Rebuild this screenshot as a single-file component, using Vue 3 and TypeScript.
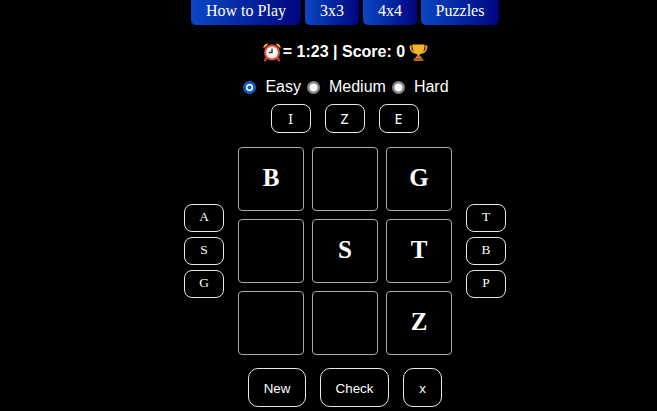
<script setup lang="ts">
const nav = ['How to Play', '3x3', '4x4', 'Puzzles']
const levels = ['Easy', 'Medium', 'Hard']
const top = ['I', 'Z', 'E']
const left = ['A', 'S', 'G']
const right = ['T', 'B', 'P']
const cells = ['B', '', 'G', '', 'S', 'T', '', '', 'Z']
const actions = ['New', 'Check', 'x']
</script>

<template>
  <main class="page">
    <nav class="nav">
      <button v-for="n in nav" :key="n" class="nav-btn" type="button">{{ n }}</button>
    </nav>
    <div class="score">
      <svg class="ico" viewBox="0 0 20 20" width="20" height="20" aria-hidden="true">
        <path d="M1.5 6.5 C1 3 4 1 6.5 2 Z" fill="#f5b52e" />
        <path d="M18.5 6.5 C19 3 16 1 13.5 2 Z" fill="#f5b52e" />
        <path d="M4.5 16 L3 18.5 M15.5 16 L17 18.5" stroke="#d8503f" stroke-width="2" stroke-linecap="round" />
        <circle cx="10" cy="10.5" r="8" fill="#e04a40" />
        <circle cx="10" cy="10.5" r="6" fill="#f7f4ef" />
        <path d="M10 6.5 V10.5 H6.8" fill="none" stroke="#333" stroke-width="1.4" />
      </svg>
      <span>= 1:23 | Score: 0</span>
      <svg class="ico trophy" viewBox="0 0 20 20" width="19" height="19" aria-hidden="true">
        <path d="M3 3.5 H1.5 C1.5 7.5 3.5 10 7 10.5 M17 3.5 H18.5 C18.5 7.5 16.5 10 13 10.5" fill="none" stroke="#f2ac26" stroke-width="1.8" />
        <path d="M3.5 1.5 H16.5 C16.5 7 15 11 11 12 V14 H9 V12 C5 11 3.5 7 3.5 1.5 Z" fill="#f7b228" />
        <path d="M7.5 14 H12.5 L13.5 16 H6.5 Z" fill="#d98a2c" />
        <rect x="5" y="16" width="10" height="3" fill="#b5602f" />
      </svg>
    </div>
    <form class="levels">
      <label v-for="(l, i) in levels" :key="l" class="level">
        <input type="radio" name="level" :value="l" :checked="i === 0" />
        <span>{{ l }}</span>
      </label>
    </form>
    <div class="letters top">
      <button v-for="t in top" :key="t" class="letter top-letter" type="button">{{ t }}</button>
    </div>
    <section class="play">
      <div class="side">
        <button v-for="t in left" :key="t" class="letter" type="button">{{ t }}</button>
      </div>
      <div class="board">
        <div v-for="(c, i) in cells" :key="i" class="cell">{{ c }}</div>
      </div>
      <div class="side">
        <button v-for="t in right" :key="t" class="letter" type="button">{{ t }}</button>
      </div>
    </section>
    <div class="actions">
      <button v-for="a in actions" :key="a" class="action" :class="'a-' + a.toLowerCase()" type="button">{{ a }}</button>
    </div>
  </main>
</template>

<style>
html, body { background: #000; margin: 0; }
</style>

<style scoped>
.page {
  box-sizing: border-box;
  width: 657px;
  height: 411px;
  padding-left: 33px;
  overflow: hidden;
  background: #000;
  color: #fff;
  display: flex;
  flex-direction: column;
  align-items: center;
}
button { background: #000; color: #fff; padding: 0; margin: 0; cursor: pointer; }
.nav { display: flex; gap: 4px; height: 25px; }
.nav-btn {
  height: 25px;
  width: 54px;
  border: 0;
  border-radius: 0 0 5px 5px;
  background: linear-gradient(90deg, #0a47c4, #00057f);
  font: 16px "Liberation Serif", serif;
  padding-bottom: 4px;
}
.nav-btn:first-child { width: 110px; }
.nav-btn:last-child { width: 78px; }
.score {
  margin-top: 16px;
  height: 22px;
  display: flex;
  align-items: center;
  gap: 1px;
  font: bold 16px "Liberation Sans", sans-serif;
}
.trophy { margin-left: 3px; }
.ico { display: block; }
.levels {
  margin: 13px 0 0 2px;
  height: 22px;
  display: flex;
  align-items: center;
  gap: 6px;
  font: 16px "Liberation Sans", sans-serif;
}
.level { display: flex; align-items: center; gap: 9px; }
.level input {
  appearance: none;
  box-sizing: border-box;
  margin: 1px 0 0;
  width: 13px;
  height: 13px;
  border-radius: 50%;
  background: radial-gradient(circle, #fff 0 3.6px, #85858c 4.4px);
}
.level input:checked {
  background: radial-gradient(circle, #0f5fc9 0 1.7px, #fff 2.4px 3.3px, #0f5fc9 4px);
}
.letters { display: flex; gap: 14px; }
.top { margin-top: 6px; }
.letter {
  width: 40px;
  height: 28px;
  border: 1px solid #e8e8e8;
  border-radius: 8px;
  font: 13.33px "Liberation Serif", serif;
  padding-bottom: 2px;
}
.top-letter {
  height: 29px;
  font: 14px "Noto Sans", "Liberation Sans", sans-serif;
  padding: 0 1px 0 0;
}
.play { margin-top: 14px; display: flex; align-items: center; gap: 14px; }
.side { display: flex; flex-direction: column; gap: 5px; }
.board { display: grid; grid-template-columns: repeat(3, 66px); grid-auto-rows: 64px; gap: 8px; }
.cell {
  box-sizing: border-box;
  border: 1px solid #aaa;
  border-radius: 4px;
  padding-bottom: 2px;
  display: flex;
  align-items: center;
  justify-content: center;
  font: bold 25px "Liberation Serif", serif;
}
.actions { margin-top: 13px; display: flex; gap: 14px; }
.action {
  height: 39px;
  width: 58px;
  border: 1px solid #e8e8e8;
  border-radius: 10px;
  padding-top: 1px;
  font: 13.33px "Liberation Sans", sans-serif;
}
.a-check { width: 69px; }
.a-x { width: 39px; }
</style>
